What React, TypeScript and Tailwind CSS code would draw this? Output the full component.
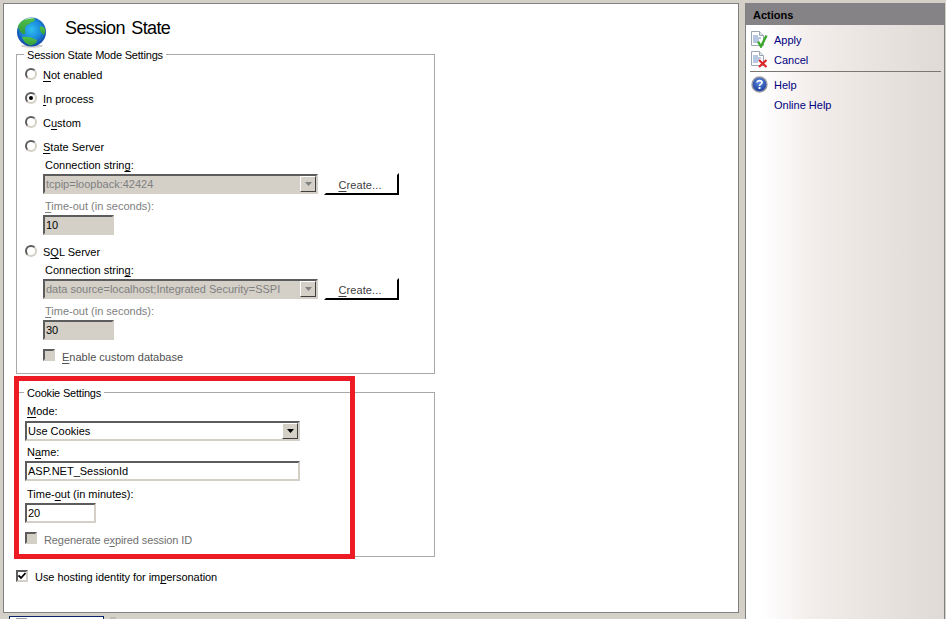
import React from "react";

const F = "font-['Liberation_Sans',sans-serif]";
const sunken = "border-2 border-t-[#5c5c5c] border-l-[#5c5c5c] border-r-[#d4d0c8] border-b-[#d4d0c8]";

function U({ children }: { children: React.ReactNode }) {
  return <span className="underline underline-offset-2">{children}</span>;
}

function Radio({ checked, mt, children }: { checked?: boolean; mt: string; children: React.ReactNode }) {
  return (
    <div className={`flex h-[14px] items-center ${mt}`}>
      <span className={`mb-[2px] ml-[8px] flex h-3 w-3 items-center justify-center rounded-full bg-white ${sunken}`}>
        {checked && <span className="h-1 w-1 rounded-full bg-black" />}
      </span>
      <span className="ml-[6px]">{children}</span>
    </div>
  );
}

function Label({ mt, ml, dim, children }: { mt: string; ml: string; dim?: boolean; children: React.ReactNode }) {
  return <div className={`h-[14px] ${mt} ${ml} ${dim ? "text-[#808080]" : "text-black"}`}>{children}</div>;
}

function Arrow({ disabled }: { disabled?: boolean }) {
  return (
    <span className="ml-auto flex h-4 w-4 shrink-0 items-center justify-center border border-t-white border-l-white border-r-[#404040] border-b-[#404040] bg-[#d4d0c8]">
      <svg width="7" height="4" viewBox="0 0 7 4">
        <path d="M0 0h7L3.5 4z" fill={disabled ? "#808080" : "#000"} />
      </svg>
    </span>
  );
}

function ConnRow({ mt, value }: { mt: string; value: string }) {
  return (
    <div className={`flex h-[22px] items-center ml-[26px] ${mt}`}>
      <div className={`flex h-5 w-[275px] items-center bg-[#d4d0c8] pl-px pr-0 text-[#808080] ${sunken}`}>
        <span className="whitespace-nowrap">{value}</span>
        <Arrow disabled />
      </div>
      <div className="ml-[6px] flex h-[22px] w-[75px] items-center justify-center border-2 border-t-white border-l-white border-r-black border-b-black pr-[3px] pt-[2px] text-[#404040]">
        <span className="tracking-[0.1px]"><U>C</U>reate...</span>
      </div>
    </div>
  );
}

function Check({ checked, disabled, lift }: { checked?: boolean; disabled?: boolean; lift: string }) {
  return (
    <span className={`flex h-3 w-3 items-center justify-center ${lift} ${sunken} ${disabled ? "bg-[#d4d0c8]" : "bg-white"}`}>
      {checked && (
        <svg width="8" height="8" viewBox="0 0 8 8" className="shrink-0">
          <path d="M0.5 3.5 L3 6 L7.5 1" fill="none" stroke="#000" strokeWidth="1.8" />
        </svg>
      )}
    </span>
  );
}

function Globe() {
  return (
    <svg width="31" height="32" viewBox="0 0 31 32" className="shrink-0">
      <defs>
        <radialGradient id="sea" cx="0.5" cy="0.42" r="0.62">
          <stop offset="0" stopColor="#2fc0f0" />
          <stop offset="0.55" stopColor="#1a86dc" />
          <stop offset="1" stopColor="#10399a" />
        </radialGradient>
        <linearGradient id="land" x1="0" y1="0" x2="0" y2="1">
          <stop offset="0" stopColor="#52c24a" />
          <stop offset="1" stopColor="#2f9a3c" />
        </linearGradient>
      </defs>
      <ellipse cx="16" cy="29" rx="11" ry="1.8" fill="#d0d0d0" />
      <circle cx="15.5" cy="15" r="14.5" fill="url(#sea)" />
      <path d="M2 9 C5 3 11 0.8 18 1 C20 3 18 5 15 5 C14 8 11 7 10 9 C8 11 10 14 9 17 C6 18 3 14 2 9z" fill="url(#land)" />
      <path d="M24 10 C26 9 28 10 29 12 C29.6 14 29 17 27.5 18 C25 16 23 13 24 10z" fill="url(#land)" />
      <path d="M6 20 C10 19 16 20 21 23 C21 26 18 28 14 28.5 C10 27 7 24 6 20z" fill="url(#land)" />
      <path d="M8 2.5 C11 1 15 0.7 18 1.2 C14 1.8 11 2.4 8 2.5z" fill="#bfe6c0" />
    </svg>
  );
}

function Doc() {
  return (
    <>
      <path d="M0.5 0.5h8l4 4v10h-12z" fill="#fff" stroke="#9aa6b4" />
      <path d="M8.5 0.5v4h4" fill="#dfe5ea" stroke="#9aa6b4" />
      <path d="M2 5h5M2 7h8M2 9h6M2 11h5" stroke="#6d8fc4" />
    </>
  );
}

function ApplyIcon() {
  return (
    <svg width="17" height="17" viewBox="0 0 17 17" className="shrink-0">
      <Doc />
      <path d="M7 10.5 L10 15.5 L15.5 4.5" fill="none" stroke="#3ba82e" strokeWidth="2.4" />
    </svg>
  );
}

function CancelIcon() {
  return (
    <svg width="17" height="17" viewBox="0 0 17 17" className="shrink-0">
      <Doc />
      <path d="M8 9 L15.5 16 M15.5 9 L8 16" fill="none" stroke="#e0242c" strokeWidth="2.2" />
    </svg>
  );
}

function HelpIcon() {
  return (
    <svg width="17" height="17" viewBox="0 0 17 17" className="shrink-0">
      <defs>
        <radialGradient id="hb" cx="0.5" cy="0.35" r="0.6">
          <stop offset="0" stopColor="#5f8fe0" />
          <stop offset="1" stopColor="#1c3f9e" />
        </radialGradient>
      </defs>
      <circle cx="8.5" cy="8.5" r="7.5" fill="url(#hb)" stroke="#9a9aa6" strokeWidth="1.4" />
      <path d="M6 6.5 C6 4 11 4 11 6.5 C11 8.2 8.5 8 8.5 10" fill="none" stroke="#fff" strokeWidth="1.7" />
      <rect x="7.6" y="11" width="1.9" height="2" fill="#fff" />
    </svg>
  );
}

function Action({ mt, icon, children }: { mt: string; icon?: React.ReactNode; children: React.ReactNode }) {
  return (
    <div className={`flex h-[17px] items-center ${mt}`}>
      <span className="ml-[5px] w-[17px] shrink-0">{icon}</span>
      <span className="ml-[6px] text-[#000080]">{children}</span>
    </div>
  );
}

export default function App() {
  return (
    <div className={`relative h-[619px] w-[946px] overflow-hidden bg-[#d4d0c8] text-[11px] leading-[14px] text-black ${F}`}>
      <div className="flex h-[613px] items-start pl-[3px] pt-[3px]">
        <main className="h-[610px] w-[736px] shrink-0 border border-[#808080] bg-white pl-[12px]">
          <header className="mt-[13px] flex h-[31px] items-start">
            <Globe />
            <h1 className="ml-[18px] text-[18px] leading-[22px] tracking-[-0.6px] [word-spacing:2px] text-black">Session State</h1>
          </header>

          <section className="relative mt-[6px] h-[320px] w-[419px] border border-[#a9a9a9]">
            <div className="absolute -top-[7px] left-[7px] bg-white px-[3px] tracking-[-0.2px]">Session State Mode Settings</div>
            <Radio mt="mt-[13px]"><U>N</U>ot enabled</Radio>
            <Radio checked mt="mt-[10px]"><U>I</U>n process</Radio>
            <Radio mt="mt-[10px]">C<U>u</U>stom</Radio>
            <Radio mt="mt-[10px]"><U>S</U>tate Server</Radio>
            <Label mt="mt-[4px]" ml="ml-[28px]">Connection strin<U>g</U>:</Label>
            <ConnRow mt="mt-px" value="tcpip=loopback:42424" />
            <Label mt="mt-[4px]" ml="ml-[28px]" dim><U>T</U>ime-out (in seconds):</Label>
            <div className={`ml-[26px] mt-[2px] flex h-5 w-[71px] items-center bg-[#d4d0c8] pl-px ${sunken}`}>10</div>
            <Radio mt="mt-[10px]">S<U>Q</U>L Server</Radio>
            <Label mt="mt-[4px]" ml="ml-[28px]">Connection strin<U>g</U>:</Label>
            <ConnRow mt="mt-px" value="data source=localhost;Integrated Security=SSPI" />
            <Label mt="mt-[4px]" ml="ml-[28px]" dim><U>T</U>ime-out (in seconds):</Label>
            <div className={`ml-[26px] mt-[2px] flex h-5 w-[71px] items-center bg-[#d4d0c8] pl-px ${sunken}`}>30</div>
            <div className="ml-[26px] mt-[10px] flex h-[14px] items-center">
              <Check disabled lift="mb-[4px]" />
              <span className="ml-[7px] text-[#505050]"><U>E</U>nable custom database</span>
            </div>
          </section>

          <section className="relative mt-[18px] h-[165px] w-[419px] border border-[#a9a9a9]">
            <div className="absolute -top-[7px] left-[7px] bg-white px-[3px] tracking-[-0.2px]">Cookie Settings</div>
            <Label mt="mt-[11px]" ml="ml-[10px]"><U>M</U>ode:</Label>
            <div className={`ml-[8px] mt-[3px] flex h-5 w-[275px] items-center bg-white pl-[1px] ${sunken}`}>
              <span>Use Cookies</span>
              <Arrow />
            </div>
            <Label mt="mt-[4px]" ml="ml-[10px]">N<U>a</U>me:</Label>
            <div className={`ml-[8px] mt-[2px] flex h-5 w-[275px] items-center bg-white pl-px ${sunken}`}>ASP.NET_SessionId</div>
            <Label mt="mt-[6px]" ml="ml-[10px]">Time-<U>o</U>ut (in minutes):</Label>
            <div className={`ml-[8px] mt-[2px] flex h-5 w-[71px] items-center bg-white pl-px ${sunken}`}>20</div>
            <div className="ml-[8px] mt-[10px] flex h-[14px] items-center">
              <Check disabled lift="mb-[4px]" />
              <span className="ml-[7px] tracking-[-0.1px] text-[#707070]">Regenerate e<U>x</U>pired session ID</span>
            </div>
          </section>

          <div className="mt-[13px] flex h-[14px] items-center">
            <Check checked lift="mb-[2px]" />
            <span className="ml-[7px] tracking-[-0.05px]">Use hosting identity for im<U>p</U>ersonation</span>
          </div>
        </main>

        <aside className="ml-[6px] h-[616px] w-[200px] shrink-0 border-x border-[#808080] bg-gradient-to-r from-white from-[8%] via-[#f2ecea] via-[35%] to-[#dfdad6]">
          <div className="flex h-[22px] items-center bg-[#858385] pl-[7px] pt-[2px] font-bold">Actions</div>
          <Action mt="mt-[6px]" icon={<ApplyIcon />}>Apply</Action>
          <Action mt="mt-[3px]" icon={<CancelIcon />}>Cancel</Action>
          <div className="ml-[4px] mt-[3px] h-px w-[191px] bg-[#7a7672]" />
          <Action mt="mt-[4px]" icon={<HelpIcon />}>Help</Action>
          <Action mt="mt-[3px]">Online Help</Action>
        </aside>
      </div>

      <div className="flex h-[6px] items-start pl-[9px] pt-[3px]">
        <div className="h-[3px] w-[95px] border-x border-t border-[#0a246a] bg-white pl-[6px] pt-px">
          <div className="h-px w-[11px] bg-[#a0a0a0]" />
        </div>
        <div className="ml-[6px] mt-px h-[2px] w-[6px] bg-[#c0bcb4]" />
      </div>

      <div className="pointer-events-none absolute left-[14px] top-[376px] h-[183px] w-[341px] border-[5px] border-[#ed1c24]" />
    </div>
  );
}
